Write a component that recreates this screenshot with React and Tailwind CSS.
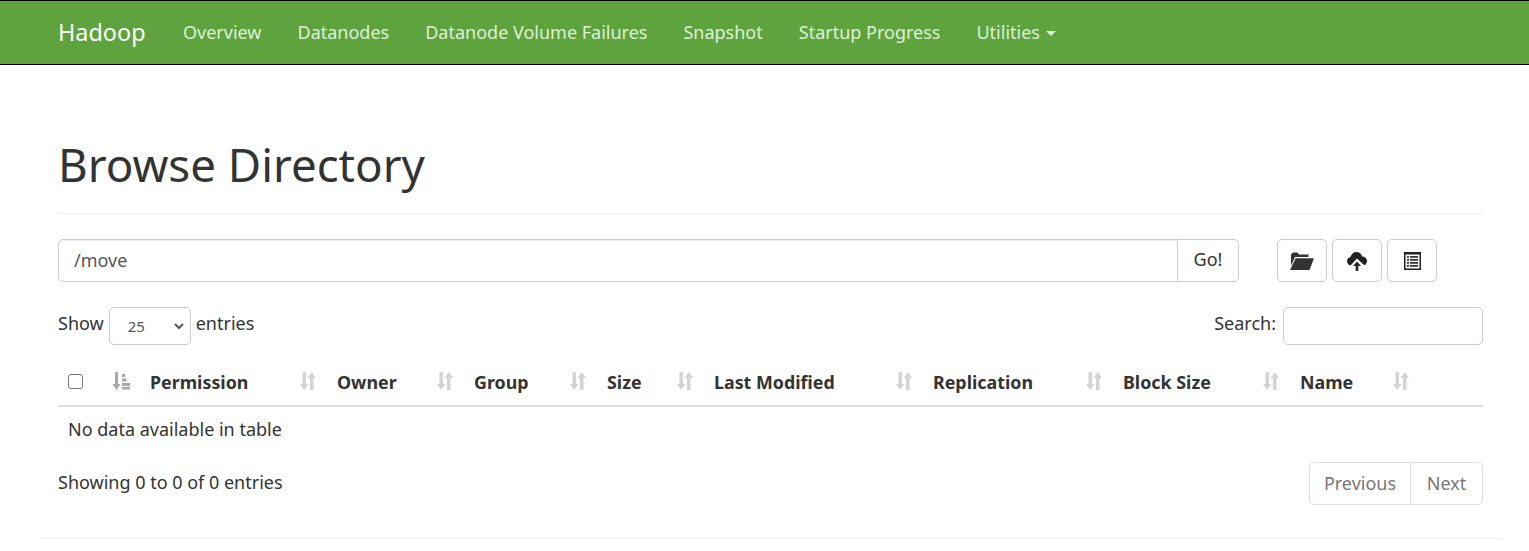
import React from 'react';

const navItems = ['Overview', 'Datanodes', 'Datanode Volume Failures', 'Snapshot', 'Startup Progress'];

const columns = [
  { name: 'Permission', width: 'w-[187px]' },
  { name: 'Owner', width: 'w-[137px]' },
  { name: 'Group', width: 'w-[133px]' },
  { name: 'Size', width: 'w-[107px]' },
  { name: 'Last Modified', width: 'w-[219px]' },
  { name: 'Replication', width: 'w-[190px]' },
  { name: 'Block Size', width: 'w-[177px]' },
  { name: 'Name', width: 'w-[130px]' },
];

// glyphicon-sort: down arrow and up arrow side by side
const SortIcon = () => (
  <svg width="18" height="18" viewBox="0 0 18 18" className="-mt-[2px] fill-[#d4d4d4]">
    <path d="M3.500 0h3.500v12h2.500L5.200 18 1 12h2.500z" />
    <path d="M11 18V6H8.500l4.300-6L17 6h-2.500v12z" />
  </svg>
);

// glyphicon-sort-by-attributes: down arrow and a stack of bars
const SortedIcon = () => (
  <svg width="18" height="18" viewBox="0 0 18 18" className="-mt-[2px] fill-[#a8a8a8]">
    <path d="M3 0h3v12h2.500l-4 6-4-6H3z" />
    <path d="M10 2h3v3h-3zM10 6.500h4.500v3H10zM10 11h8v3h-8zM10 15h8v2.500h-8z" />
  </svg>
);

const FolderOpenIcon = () => (
  <svg width="24" height="18" viewBox="0 0 24 18" className="fill-[#333]">
    <path d="M1 2.500 3 .5h4.500L9 2.500h9.500V5H5L1 14z" />
    <path d="M5.700 6.200H24L19.500 18H0z" />
  </svg>
);

const CloudUploadIcon = () => (
  <svg width="20" height="20" viewBox="0 0 20 20" className="fill-[#222]">
    <path d="M3.500 14.500C1.500 14 0 12.300 0 10.200c0-2.100 1.500-3.800 3.500-4.100C4.300 3.200 6.600 1 9.300 1c2.700 0 5 1.800 5.700 4.400 2.800 0 5 2.100 5 4.700 0 1.900-1.100 3.500-2.700 4.200L10 7.500z" />
    <path d="M10 10.500 14 15h-2.700v5H8.700v-5H6z" />
  </svg>
);

const ListAltIcon = () => (
  <svg width="17" height="18" viewBox="0 0 17 18" className="ml-[1px]">
    <path className="fill-[#222]" d="M0 0h17v18H0z" />
    <path className="fill-white" d="M1.500 2.500h14v14h-14z" />
    <path className="fill-[#333]" d="M3 4h2v1.800H3zM6 4h8v1.800H6zM3 7h2v1.800H3zM6 7h8v1.800H6zM3 10h2v1.800H3zM6 10h8v1.800H6zM3 13h2v1.800H3zM6 13h8v1.800H6z" />
  </svg>
);

const IconButton = ({ children }) => (
  <button className="flex h-[43px] w-[50px] items-center justify-center rounded-[5px] border border-[#ccc] bg-white">
    {children}
  </button>
);

const App = () => {
  return (
    <div className="min-h-[551px] bg-white font-['Noto_Sans',sans-serif] text-[18px] text-[#333]">
      {/* Navbar */}
      <nav className="flex h-[65px] items-center border-y border-black bg-[#5fa33e] pl-[58px]">
        <span className="mr-[38px] w-[87px] whitespace-nowrap text-[23.4px] text-white">Hadoop</span>
        <div className="flex items-center gap-[36px] text-[18px] text-[#dff0d8]">
          {navItems.map((item) => (
            <span key={item}>{item}</span>
          ))}
          <span className="flex items-center gap-[6px]">
            Utilities
            <span className="mt-[2px] border-x-[5px] border-t-[5px] border-x-transparent border-t-[#dff0d8]" />
          </span>
        </div>
      </nav>

      <div className="ml-[40px] mr-[27px] border-b border-[#eee] pb-[33px] pl-[18px] pr-[19px]">
        <h1 className="border-b border-[#eee] pb-[17px] pt-[67px] text-[45.7px] leading-[64px]">Browse Directory</h1>

        {/* Path bar and actions */}
        <div className="mt-[25px] flex">
          <div className="flex h-[43px] w-[1181px]">
            <input
              readOnly
              value="/move"
              className="h-full min-w-0 flex-1 rounded-l-[5px] border border-[#ccc] px-[15px] pb-[2px] text-[18px] text-[#555] shadow-[inset_0_1px_1px_rgba(0,0,0,0.075)] outline-none"
            />
            <button className="-ml-px w-[62px] rounded-r-[5px] border border-[#ccc] bg-white pb-[2px]">Go!</button>
          </div>
          <div className="ml-[38px] flex gap-[5px]">
            <IconButton><FolderOpenIcon /></IconButton>
            <IconButton><CloudUploadIcon /></IconButton>
            <IconButton><ListAltIcon /></IconButton>
          </div>
        </div>

        {/* Length and filter controls */}
        <div className="mt-[25px] flex h-[38px] items-center justify-between">
          <div className="flex items-center gap-[5px]">
            <span className="pb-[6px]">Show</span>
            <div className="flex h-[38px] w-[82px] items-center justify-between rounded-[5px] border border-[#ccc] pl-[18px] pr-[3px] text-[15px] text-[#555]">
              <span>25</span>
              <svg width="16" height="16" viewBox="0 0 16 16" fill="none" stroke="#555" strokeWidth="2">
                <path d="m4 6 4 4 4-4" />
              </svg>
            </div>
            <span className="pb-[6px]">entries</span>
          </div>
          <div className="flex items-center gap-[7px]">
            <span className="pb-[6px]">Search:</span>
            <input className="h-[38px] w-[200px] rounded-[5px] border border-[#ccc] outline-none" />
          </div>
        </div>

        {/* Table */}
        <div className="mt-[16px] flex h-[46px] items-center border-b-2 border-[#ddd] pb-[2px] text-[17.85px] font-bold">
          <div className="flex w-[82px] items-center justify-between px-[10px]">
            <span className="-mt-[2px] h-[15px] w-[15px] rounded-[3px] border border-[#767676] bg-white" />
            <SortedIcon />
          </div>
          {columns.map((col) => (
            <div key={col.name} className={`flex items-center justify-between px-[10px] ${col.width}`}>
              <span>{col.name}</span>
              <SortIcon />
            </div>
          ))}
        </div>
        <div className="flex h-[46px] items-center px-[10px] pb-[2px]">No data available in table</div>

        {/* Footer */}
        <div className="mt-[9px] flex items-start justify-between">
          <span className="mt-[7px]">Showing 0 to 0 of 0 entries</span>
          <div className="flex h-[43px] rounded-[5px] border border-[#ddd] text-[#777]">
            <span className="flex w-[101px] items-center justify-center border-r border-[#ddd]">Previous</span>
            <span className="flex w-[71px] items-center justify-center">Next</span>
          </div>
        </div>
      </div>
    </div>
  );
};

export default App;
